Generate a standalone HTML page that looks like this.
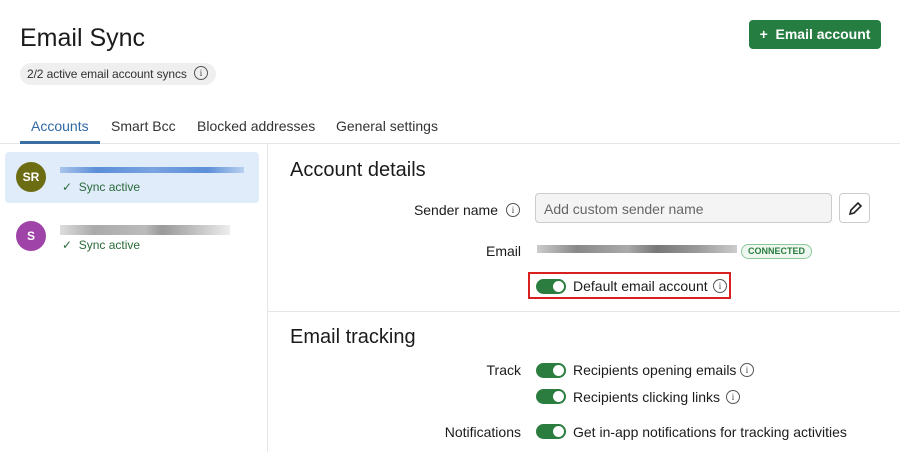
<!DOCTYPE html><html><head><style>
*{box-sizing:border-box;margin:0;padding:0}
body{width:900px;height:452px;overflow:hidden;background:#fff;font-family:"Liberation Sans",sans-serif;color:#1b1b1b;position:relative}
.a{position:absolute;white-space:nowrap}
.tg{position:absolute;width:30px;height:15px;border-radius:8px;background:#2a7d3f}
.tg:after{content:"";position:absolute;right:2px;top:2px;width:11px;height:11px;border-radius:50%;background:#fff}
.info{position:absolute;width:14px;height:14px;border:1.2px solid #555;border-radius:50%;font:9px/12px "Liberation Serif",serif;text-align:center;color:#444}
.lbl{font-size:14px;text-align:right}
.t{font-size:14px}
</style></head><body>
<div class="a" style="left:20px;top:24px;font-size:25px">Email Sync</div>
<div class="a" style="left:20px;top:63px;width:196px;height:22px;border-radius:11px;background:#efefef"></div>
<div class="a" style="left:27px;top:67px;font-size:12px;letter-spacing:-0.1px;color:#333">2/2 active email account syncs</div>
<div class="info" style="left:194px;top:66px">i</div>
<div class="a" style="left:749px;top:20px;width:132px;height:29px;border-radius:4px;background:#267d41;color:#fff;font-weight:bold;font-size:14px;line-height:29px;text-align:center">+&nbsp;&nbsp;Email account</div>
<div class="a" style="left:31px;top:118px;font-size:14px;color:#2f69a3">Accounts</div>
<div class="a" style="left:111px;top:118px;font-size:14px;color:#333">Smart Bcc</div>
<div class="a" style="left:197px;top:118px;font-size:14px;color:#333">Blocked addresses</div>
<div class="a" style="left:336px;top:118px;font-size:14px;color:#333">General settings</div>
<div class="a" style="left:0;top:143px;width:900px;height:1px;background:#e6e6e6"></div>
<div class="a" style="left:20px;top:141px;width:80px;height:3px;background:#3b6ea3"></div>
<div class="a" style="left:267px;top:144px;width:1px;height:308px;background:#e6e6e6"></div>
<div class="a" style="left:5px;top:152px;width:254px;height:51px;border-radius:4px;background:#e1ecfb"></div>
<div class="a" style="left:16px;top:162px;width:30px;height:30px;border-radius:50%;background:#6c6c12;color:#fff;font:bold 12px/30px 'Liberation Sans';text-align:center">SR</div>
<div class="a" style="left:60px;top:167px;width:184px;height:6px;background:linear-gradient(90deg,#a9c4ec,#5b8fd8 20%,#7aa3e0 50%,#5b8fd8 80%,#b9d0f0)"></div>
<div class="a" style="left:62px;top:180px;font-size:12px;color:#2a6a3a">✓&nbsp;&nbsp;Sync active</div>
<div class="a" style="left:16px;top:221px;width:30px;height:30px;border-radius:50%;background:#a043a8;color:#fff;font:bold 12px/30px 'Liberation Sans';text-align:center">S</div>
<div class="a" style="left:60px;top:225px;width:170px;height:10px;background:linear-gradient(90deg,#ddd,#aaa 20%,#bbb 50%,#999 60%,#ccc 85%,#eee)"></div>
<div class="a" style="left:62px;top:238px;font-size:12px;color:#2a6a3a">✓&nbsp;&nbsp;Sync active</div>
<div class="a" style="left:290px;top:159px;font-size:20px">Account details</div>
<div class="a lbl" style="left:380px;width:118px;top:202px">Sender name</div>
<div class="info" style="left:506px;top:203px">i</div>
<div class="a" style="left:535px;top:193px;width:297px;height:30px;border:1px solid #ccc;border-radius:4px;background:#f4f4f4;font-size:14px;color:#666;padding:7px 8px">Add custom sender name</div>
<div class="a" style="left:839px;top:193px;width:31px;height:30px;border:1px solid #ccc;border-radius:4px"><svg width="31" height="30" viewBox="0 0 31 30"><path d="M10 20l1-4 7-7 3 3-7 7z" fill="none" stroke="#222" stroke-width="1.6"/></svg></div>
<div class="a lbl" style="left:420px;width:101px;top:243px">Email</div>
<div class="a" style="left:537px;top:245px;width:200px;height:8px;background:linear-gradient(90deg,#ccc,#888 20%,#aaa 45%,#777 60%,#999 80%,#ccc)"></div>
<div class="a" style="left:741px;top:244px;width:71px;height:15px;border:1px solid #8cc79c;border-radius:8px;background:#eef8f0;color:#2a7d3f;font:bold 9px/13px 'Liberation Sans';text-align:center">CONNECTED</div>
<div class="a" style="left:528px;top:272px;width:203px;height:27px;border:2px solid #d8201e"></div>
<div class="tg" style="left:536px;top:279px"></div>
<div class="a t" style="left:573px;top:278px">Default email account</div>
<div class="info" style="left:713px;top:279px">i</div>
<div class="a" style="left:268px;top:311px;width:632px;height:1px;background:#e6e6e6"></div>
<div class="a" style="left:290px;top:326px;font-size:20px">Email tracking</div>
<div class="a lbl" style="left:420px;width:101px;top:362px">Track</div>
<div class="tg" style="left:536px;top:363px"></div>
<div class="a t" style="left:573px;top:362px">Recipients opening emails</div>
<div class="info" style="left:740px;top:363px">i</div>
<div class="tg" style="left:536px;top:389px"></div>
<div class="a t" style="left:573px;top:389px">Recipients clicking links</div>
<div class="info" style="left:726px;top:390px">i</div>
<div class="a lbl" style="left:400px;width:121px;top:424px">Notifications</div>
<div class="tg" style="left:536px;top:424px"></div>
<div class="a t" style="left:573px;top:424px">Get in-app notifications for tracking activities</div>
</body></html>
